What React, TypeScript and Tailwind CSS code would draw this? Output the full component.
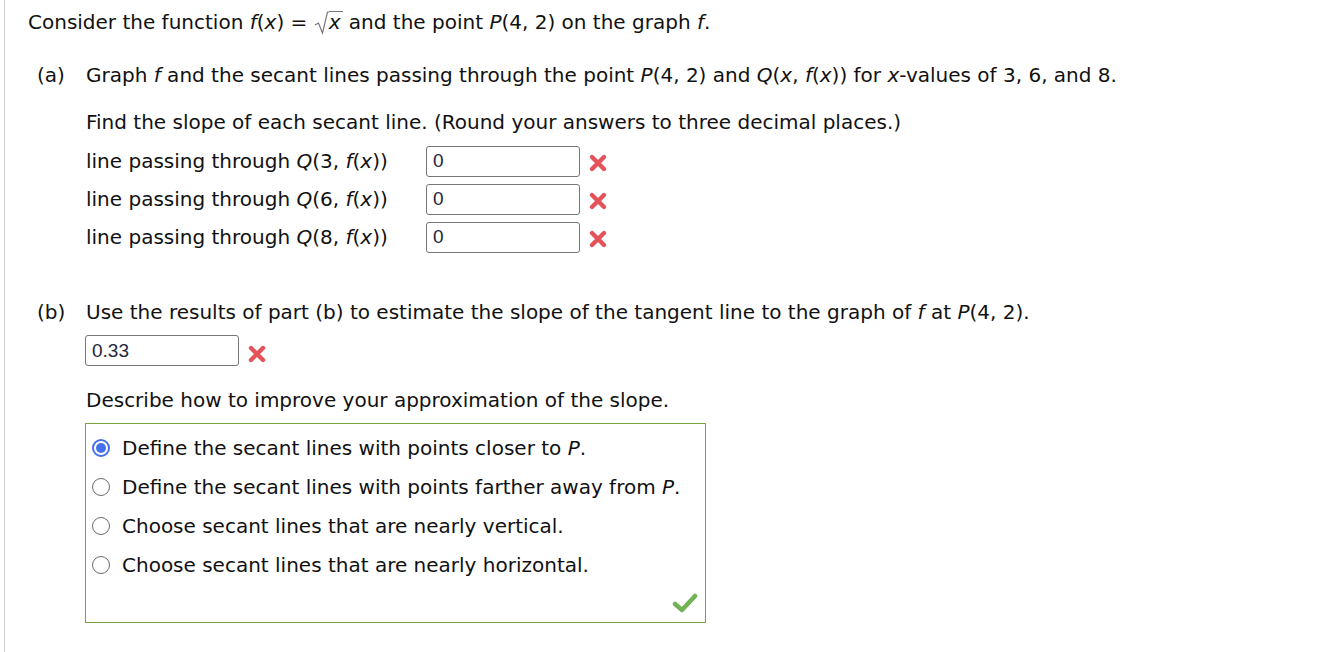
import React from "react";

const XMark = () => (
  <svg width="20" height="20" viewBox="0 0 20 20" className="shrink-0">
    <path d="M4 4 L16 16 M16 4 L4 16" stroke="#e35359" strokeWidth="4.4" strokeLinecap="round" />
  </svg>
);

const Check = () => (
  <svg width="26" height="22" viewBox="0 0 26 22">
    <path d="M3 12 L10 18 L23 4" stroke="#72b356" strokeWidth="4.5" fill="none" strokeLinecap="round" strokeLinejoin="round" />
  </svg>
);

const I = ({ children }: { children: React.ReactNode }) => <i className="italic">{children}</i>;

const Input = ({ value, w = "w-[154px]" }: { value: string; w?: string }) => (
  <div className={`${w} h-[31px] border border-[#777] rounded-[3px] flex items-center px-[6px] bg-white text-[#23263a] text-[19px] font-['Liberation_Sans',Arial,sans-serif]`}>
    {value}
  </div>
);

const Radio = ({ checked }: { checked?: boolean }) =>
  checked ? (
    <span className="w-[18px] h-[18px] rounded-full border-2 border-[#4470ee] flex items-center justify-center shrink-0">
      <span className="w-[10px] h-[10px] rounded-full bg-[#4470ee]" />
    </span>
  ) : (
    <span className="w-[18px] h-[18px] rounded-full border border-[#6b6b6b] bg-white shrink-0" />
  );

export default function App() {
  const rows = ["3", "6", "8"];
  const opts: React.ReactNode[] = [
    <>Define the secant lines with points closer to <I>P</I>.</>,
    <>Define the secant lines with points farther away from <I>P</I>.</>,
    <>Choose secant lines that are nearly vertical.</>,
    <>Choose secant lines that are nearly horizontal.</>,
  ];
  return (
    <div className="w-[1339px] h-[652px] bg-white overflow-hidden flex">
      <div className="w-[4px] shrink-0" />
      <div className="w-px bg-[#cfcfcf] shrink-0" />
      <div className="flex-1 text-[20px] leading-[26px] text-[#111] font-['DejaVu_Sans',Verdana,sans-serif] pl-[23px] pt-[9px]">
        <div className="flex items-center">
          Consider the function&nbsp;<I>f</I>(<I>x</I>)&nbsp;=&nbsp;
          <span className="inline-flex items-end">
            <svg width="15" height="24" viewBox="0 0 15 24" className="mb-[-2px]">
              <path d="M1 14 L4.5 12 L8.5 22 L13.5 1 L15 1" stroke="#777" strokeWidth="1.2" fill="none" />
            </svg>
            <span className="border-t border-[#777] leading-[21px] pr-[2px]"><I>x</I></span>
          </span>
          &nbsp;and the point&nbsp;<I>P</I>(4, 2) on the graph&nbsp;<I>f</I>.
        </div>

        <div className="flex mt-[27px]">
          <div className="w-[58px] pl-[9px]">(a)</div>
          <div className="flex flex-col">
            <div>
              Graph <I>f</I> and the secant lines passing through the point <I>P</I>(4, 2) and <I>Q</I>(<I>x</I>, <I>f</I>(<I>x</I>)) for <I>x</I>-values of 3, 6, and 8.
            </div>
            <div className="mt-[21px]">Find the slope of each secant line. (Round your answers to three decimal places.)</div>
            <div className="mt-[7px] flex flex-col">
              {rows.map((r) => (
                <div key={r} className="h-[38px] flex items-center">
                  <div className="w-[340px]">
                    line passing through <I>Q</I>({r}, <I>f</I>(<I>x</I>))
                  </div>
                  <Input value="0" />
                  <div className="ml-[8px] mt-[4px]"><XMark /></div>
                </div>
              ))}
            </div>
          </div>
        </div>

        <div className="flex mt-[43px]">
          <div className="w-[58px] pl-[9px]">(b)</div>
          <div className="flex flex-col">
            <div>
              Use the results of part (b) to estimate the slope of the tangent line to the graph of <I>f</I> at <I>P</I>(4, 2).
            </div>
            <div className="mt-[10px] flex items-center ml-[-1px]">
              <Input value="0.33" />
              <div className="ml-[8px] mt-[6px]"><XMark /></div>
            </div>
            <div className="mt-[21px]">Describe how to improve your approximation of the slope.</div>
            <div className="mt-[10px] ml-[-1px] w-[621px] h-[200px] border border-[#7aa23f] pt-[4px] pl-[6px] flex flex-col relative">
              {opts.map((o, i) => (
                <div key={i} className="h-[39px] flex items-center">
                  <Radio checked={i === 0} />
                  <span className="ml-[12px]">{o}</span>
                </div>
              ))}
              <div className="absolute right-[7px] bottom-[8px]"><Check /></div>
            </div>
          </div>
        </div>
      </div>
    </div>
  );
}
